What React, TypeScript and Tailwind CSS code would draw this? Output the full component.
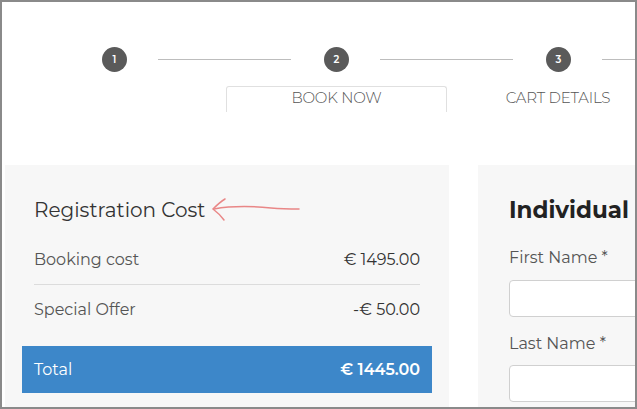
export default function App() {
  return (
    <div className="h-[409px] w-[637px] overflow-hidden border-2 border-[#8a8a8a] bg-white font-['Montserrat','Inter',sans-serif] text-[#555]">
      {/* steps */}
      <div className="flex items-center gap-[31px] overflow-hidden pl-[100px] pt-[45px]">
        <StepDot n={1} />
        <div className="h-px w-[133px] shrink-0 bg-[#bdbdbd]" />
        <div className="ml-[2px] shrink-0">
          <StepDot n={2} />
        </div>
        <div className="h-px w-[133px] shrink-0 bg-[#bdbdbd]" />
        <div className="ml-[2px] shrink-0">
          <StepDot n={3} />
        </div>
        <div className="h-px w-[133px] shrink-0 bg-[#bdbdbd]" />
      </div>

      <div className="mt-[14px] flex overflow-hidden pl-[224px]">
        <div className="flex h-[26px] w-[221px] shrink-0 items-center justify-center rounded-t-[3px] border border-b-0 border-[#e0e0e0] pb-[2px] text-[15px] font-light tracking-[-0.2px]">
          BOOK NOW
        </div>
        <div className="flex h-[26px] w-[222px] shrink-0 items-center justify-center pb-[2px] text-[15px] font-light tracking-[-0.2px]">
          CART DETAILS
        </div>
      </div>

      {/* panels */}
      <div className="mt-[53px] flex gap-[29px] pl-[3px]">
        <div className="h-[260px] w-[444px] shrink-0 bg-[#f7f7f7] pt-[31px]">
          <div className="flex items-center px-[29px]">
            <h2 className="text-[20px] leading-[28px] text-[#333]">Registration Cost</h2>
            <svg width="92" height="26" viewBox="0 0 92 26" className="ml-[6px]" fill="none">
              <path
                d="M14 2 C9 5 5 9 2 12 C6 15 10 19 13 23"
                stroke="#e98787"
                strokeWidth="1.5"
                strokeLinecap="round"
              />
              <path
                d="M3 12 C20 9 40 9 60 11 C72 12 80 12 88 12"
                stroke="#e98787"
                strokeWidth="1.5"
                strokeLinecap="round"
              />
            </svg>
          </div>

          <div className="mt-[12px] px-[29px]">
            <div className="flex h-[49px] items-center justify-between border-b border-[#dcdcdc] text-[16px]">
              <span>Booking cost</span>
              <span className="text-[#333]">€ 1495.00</span>
            </div>
            <div className="flex h-[49px] items-center justify-between text-[16px]">
              <span>Special Offer</span>
              <span className="text-[#333]">-€ 50.00</span>
            </div>
          </div>

          <div className="mx-[17px] mt-[12px] flex h-[47px] items-center justify-between bg-[#3d87c9] px-[12px] text-[16px] text-white">
            <span>Total</span>
            <span className="font-semibold">€ 1445.00</span>
          </div>
        </div>

        <div className="h-[260px] flex-1 bg-[#f7f7f7] pl-[31px] pt-[29px]">
          <h2 className="whitespace-nowrap text-[23px] font-bold leading-[32px] text-[#222]">
            Individual
          </h2>
          <label className="mt-[20px] block text-[16px] leading-[24px]">First Name *</label>
          <div className="mt-[10px] h-[37px] w-[200px] rounded-[4px] border border-[#d0d0d0] bg-white" />
          <label className="mt-[15px] block text-[16px] leading-[24px]">Last Name *</label>
          <div className="mt-[9px] h-[37px] w-[200px] rounded-[4px] border border-[#d0d0d0] bg-white" />
        </div>
      </div>
    </div>
  );
}

function StepDot({ n }: { n: number }) {
  return (
    <div className="flex h-[25px] w-[25px] shrink-0 items-center justify-center rounded-full bg-[#5a5a5a] text-[10px] font-semibold text-white">
      {n}
    </div>
  );
}
